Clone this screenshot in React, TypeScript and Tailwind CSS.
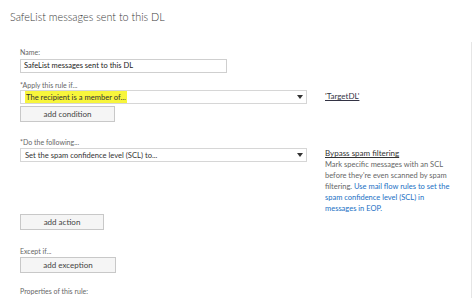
import React from "react";

const font = { fontFamily: 'Lato, "Open Sans", Arial, sans-serif' };

function Arrow() {
  return (
    <svg width="6" height="4" viewBox="0 0 6 4" className="shrink-0">
      <path d="M0 0 L6 0 L3 4 Z" fill="#333" />
    </svg>
  );
}

function Select({ children }: { children: React.ReactNode }) {
  return (
    <div className="flex h-[14px] w-[287px] items-center justify-between border border-[#d6d6d6] bg-white pl-[4px] pr-[3px]">
      <div className="text-[7.6px] leading-[10px] text-[#333]">{children}</div>
      <Arrow />
    </div>
  );
}

function Button({ label, w }: { label: string; w: string }) {
  return (
    <div
      className={`flex h-[16px] items-center justify-center border border-[#c8c8c8] bg-[#f5f5f5] text-[8px] text-[#444] ${w}`}
    >
      {label}
    </div>
  );
}

export default function App() {
  return (
    <div className="h-[298px] w-[474px] overflow-hidden bg-white" style={font}>
      <div className="h-[42px] pl-[10px] pt-[8px] text-[10.8px] font-light leading-[18px] text-[#3a3a3a]">
        SafeList messages sent to this DL
      </div>

      <div className="mr-[2px] h-[256px] border-r border-[#e6e6e6] pl-[20px]">
        <div className="pt-[5px] text-[7px] leading-[10px] text-[#666]">Name:</div>
        <div className="mt-[2px] flex h-[14px] w-[207px] items-center border border-[#cfcfcf] pl-[3px] text-[7.5px] text-[#222]">
          SafeList messages sent to this DL
        </div>

        <div className="mt-[7px] text-[7px] leading-[10px] text-[#666]">*Apply this rule if...</div>
        <div className="flex items-start gap-[18px]">
          <div>
            <Select>
              <span className="bg-[#f7f53c] px-[1px] py-[1px]">The recipient is a member of...</span>
            </Select>
            <div className="mt-[2px]">
              <Button label="add condition" w="w-[95px]" />
            </div>
          </div>
          <div className="pt-[1px] text-[8px] leading-[11px] text-[#334] underline">'TargetDL'</div>
        </div>

        <div className="mt-[15px] text-[7px] leading-[10px] text-[#666]">*Do the following...</div>
        <div className="mt-[1px] flex items-start gap-[18px]">
          <div>
            <Select>Set the spam confidence level (SCL) to...</Select>
          </div>
          <div className="whitespace-nowrap text-[7.5px] leading-[11px] text-[#666]">
            <div className="text-[8px] text-[#333] underline">Bypass spam filtering</div>
            Mark specific messages with an SCL
            <br />
            before they're even scanned by spam
            <br />
            filtering. <span className="text-[#1a6fc4]">Use mail flow rules to set the</span>
            <br />
            <span className="text-[#1a6fc4]">spam confidence level (SCL) in</span>
            <br />
            <span className="text-[#1a6fc4]">messages in EOP.</span>
          </div>
        </div>

        <Button label="add action" w="w-[84px]" />

        <div className="mt-[16px] text-[7px] leading-[10px] text-[#666]">Except if...</div>
        <div className="mt-[1px]">
          <Button label="add exception" w="w-[96px]" />
        </div>

        <div className="mt-[13px] text-[7px] leading-[10px] text-[#666]">Properties of this rule:</div>
      </div>
    </div>
  );
}
